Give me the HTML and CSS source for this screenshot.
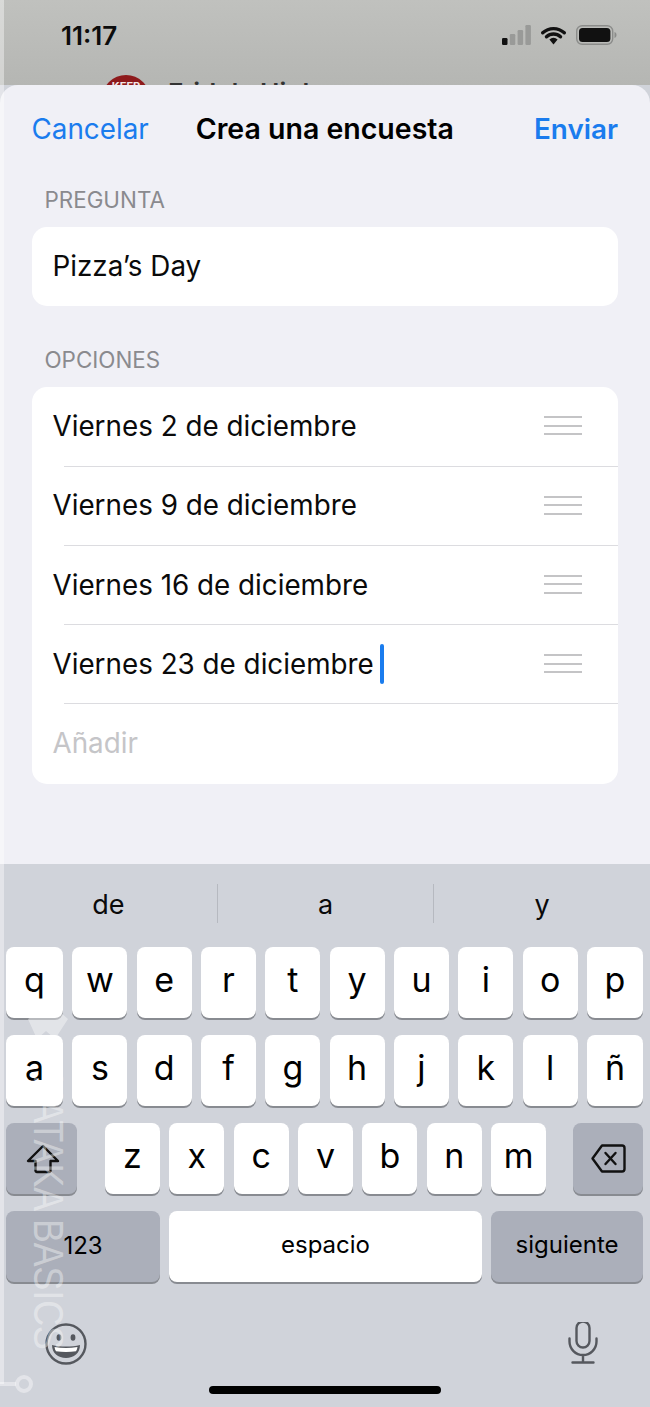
FILE: index.html
```html
<!DOCTYPE html>
<html lang="es">
<head>
    <meta charset="UTF-8">
    <meta name="viewport" content="width=device-width, initial-scale=1.0">
    <title>Crea una encuesta</title>
    <link rel="stylesheet" href="styles.css">
</head>
<body>
    <!-- Status bar and the chat behind the sheet -->
    <header class="backdrop">
        <div class="status-bar">
            <span class="status-time">11:17</span>
            <div class="status-icons">
                <svg width="29" height="20" viewBox="0 0 29 20">
                    <rect x="0" y="13" width="5.500" height="7" rx="1.200" fill="#111"/>
                    <rect x="7.800" y="9" width="5.500" height="11" rx="1.200" fill="#999a98"/>
                    <rect x="15.600" y="5" width="5.500" height="15" rx="1.200" fill="#999a98"/>
                    <rect x="23.400" y="0" width="5.500" height="20" rx="1.200" fill="#999a98"/>
                </svg>
                <svg width="25" height="19" viewBox="0 0 25 19">
                    <path d="M1.700 6.800a15.800 15.800 0 0 1 21.600 0M5.500 10.800a10.200 10.200 0 0 1 14 0" fill="none" stroke="#111" stroke-width="3.300" stroke-linecap="round"/>
                    <path d="M8.400 13.400a6.200 6.200 0 0 1 8.200 0L12.500 18.600z" fill="#111"/>
                </svg>
                <svg width="41" height="20" viewBox="0 0 41 20">
                    <rect x="0.700" y="0.700" width="36" height="18.600" rx="5.500" fill="none" stroke="#8b8c8a" stroke-width="1.400"/>
                    <rect x="3" y="3" width="31.400" height="14" rx="3.500" fill="#111"/>
                    <path d="M38.500 7v6c1.400-.4 2-1.600 2-3s-.6-2.600-2-3z" fill="#8b8c8a"/>
                </svg>
            </div>
        </div>
        <div class="chat-peek">
            <span class="chat-avatar">KEEP</span>
            <span class="chat-name">Frida's High</span>
        </div>
    </header>

    <main class="sheet">
        <nav class="sheet-nav">
            <span class="nav-link">Cancelar</span>
            <span class="nav-title">Crea una encuesta</span>
            <span class="nav-link nav-link-strong">Enviar</span>
        </nav>

        <div class="section-label">PREGUNTA</div>
        <div class="card">
            <div class="row">Pizza’s Day</div>
        </div>

        <div class="section-label section-label-options">OPCIONES</div>
        <div class="card">
            <div class="row row-line">Viernes 2 de diciembre<span class="handle"></span></div>
            <div class="row row-line">Viernes 9 de diciembre<span class="handle"></span></div>
            <div class="row row-line">Viernes 16 de diciembre<span class="handle"></span></div>
            <div class="row row-line">Viernes 23 de diciembre<span class="caret"></span><span class="handle"></span></div>
            <div class="row row-placeholder">Añadir</div>
        </div>
    </main>

    <section class="keyboard">
        <div class="suggestions">
            <span class="suggestion">de</span>
            <span class="suggestion">a</span>
            <span class="suggestion">y</span>
        </div>
        <div class="key-rows">
            <div class="key-row">
                <span class="key">q</span><span class="key">w</span><span class="key">e</span><span class="key">r</span><span class="key">t</span><span class="key">y</span><span class="key">u</span><span class="key">i</span><span class="key">o</span><span class="key">p</span>
            </div>
            <div class="key-row">
                <span class="key">a</span><span class="key">s</span><span class="key">d</span><span class="key">f</span><span class="key">g</span><span class="key">h</span><span class="key">j</span><span class="key">k</span><span class="key">l</span><span class="key">ñ</span>
            </div>
            <div class="key-row key-row-third">
                <span class="key key-dark key-shift">
                    <svg width="34" height="30" viewBox="0 0 34 30">
                        <path d="M17 2 2 17h7.500v9.500a1.500 1.500 0 0 0 1.500 1.500h12a1.500 1.500 0 0 0 1.500-1.500V17H32z" fill="none" stroke="#111" stroke-width="2.400" stroke-linejoin="round"/>
                    </svg>
                </span>
                <div class="key-letters">
                    <span class="key">z</span><span class="key">x</span><span class="key">c</span><span class="key">v</span><span class="key">b</span><span class="key">n</span><span class="key">m</span>
                </div>
                <span class="key key-dark key-delete">
                    <svg width="35" height="29" viewBox="0 0 35 29">
                        <path d="M11 1.500h20a2.500 2.500 0 0 1 2.500 2.500v21a2.500 2.500 0 0 1-2.500 2.500H11L1.500 14.500z" fill="none" stroke="#111" stroke-width="2.400" stroke-linejoin="round"/>
                        <path d="m14.500 9 10 11m0-11-10 11" fill="none" stroke="#111" stroke-width="2.400" stroke-linecap="round"/>
                    </svg>
                </span>
            </div>
            <div class="key-row key-row-bottom">
                <span class="key key-dark key-text key-numbers">123</span>
                <span class="key key-text key-space">espacio</span>
                <span class="key key-dark key-text key-next">siguiente</span>
            </div>
        </div>
        <div class="keyboard-tools">
            <svg width="44" height="44" viewBox="0 0 44 44">
                <circle cx="22" cy="22" r="19.500" fill="none" stroke="#55585e" stroke-width="2.400"/>
                <ellipse cx="15" cy="15.500" rx="2.400" ry="3.200" fill="#55585e"/>
                <ellipse cx="29" cy="15.500" rx="2.400" ry="3.200" fill="#55585e"/>
                <path d="M8 23c8 2 20 2 28 0 0 8-6 13-14 13S8 31 8 23z" fill="#55585e"/>
                <path d="M10.500 25c7.300 1.300 15.700 1.300 23 0-.3 1.800-.8 3.200-1.500 4.300-6.500 1-13.500 1-20 0-.7-1.100-1.200-2.500-1.500-4.300z" fill="#fff"/>
            </svg>
            <svg width="30" height="44" viewBox="0 2 30 44">
                <rect x="8.500" y="1.500" width="13" height="26" rx="6.500" fill="none" stroke="#55585e" stroke-width="2.400"/>
                <path d="M1.500 18.500v3a13.500 13.500 0 0 0 27 0v-3M15 35v7.500M4.500 42.500h21" fill="none" stroke="#55585e" stroke-width="2.400" stroke-linecap="round"/>
            </svg>
        </div>
        <div class="home-bar"></div>
    </section>

    <!-- Watermark over the whole screenshot -->
    <div class="wm-line"></div>
    <div class="wm-foot"></div>
    <div class="wm-dot"></div>
    <svg class="wm-logo" width="44" height="36" viewBox="0 0 44 36">
        <path d="M2 15 26 1l16 14-13 20-9-8-9 8z" fill="#fff"/>
    </svg>
    <div class="wm-text">XATAKA BASICS</div>
</body>
</html>
```

FILE: styles.css
```css
* {
    box-sizing: border-box;
}

body {
    margin: 0;
    width: 650px;
    height: 1407px;
    overflow: hidden;
    position: relative;
    display: flex;
    flex-direction: column;
    font-family: Inter, "Liberation Sans", sans-serif;
    color: #0a0a0a;
    background: #d0d3da;
}

.backdrop {
    height: 85px;
    overflow: hidden;
    background: linear-gradient(180deg, #c0c1be 0%, #b5b6b3 100%);
}

.status-bar {
    height: 70px;
    display: flex;
    align-items: center;
    justify-content: space-between;
    padding: 0 33px 0 61px;
}

.status-time {
    font-size: 26px;
    font-weight: 600;
    color: #0c0c0c;
}

.status-icons {
    display: flex;
    align-items: center;
    gap: 10px;
}

.chat-peek {
    display: flex;
    align-items: flex-start;
    gap: 18px;
    padding-left: 102px;
    margin-top: 5px;
}

.chat-avatar {
    width: 48px;
    height: 48px;
    padding-top: 4px;
    border-radius: 50%;
    background: #8e1a1c;
    color: #f2e6e6;
    font-size: 11px;
    font-weight: 700;
    line-height: 14px;
    text-align: center;
}

.chat-name {
    margin-top: 4px;
    font-size: 26px;
    font-weight: 600;
    line-height: 28px;
    color: #333;
}

.sheet {
    height: 779px;
    padding: 0 32px 0 31.500px;
    background: #f0f0f6;
    border-radius: 18px 18px 0 0;
}

.sheet-nav {
    height: 87px;
    display: grid;
    grid-template-columns: 1fr auto 1fr;
    align-items: center;
}

.nav-link {
    font-size: 27.800px;
    color: #1a7cee;
}

.nav-link-strong {
    justify-self: end;
    font-weight: 600;
}

.nav-title {
    font-size: 28.500px;
    font-weight: 600;
    color: #000;
}

.section-label {
    height: 55px;
    padding: 14px 0 0 13px;
    font-size: 22.400px;
    line-height: 28px;
    color: #8a8a8e;
}

.section-label-options {
    height: 81px;
    padding-top: 40px;
}

.card {
    background: #fff;
    border-radius: 15px;
    overflow: hidden;
}

.row {
    height: 79.300px;
    display: flex;
    align-items: center;
    position: relative;
    padding: 0 0 2px 21px;
    font-size: 27.800px;
}

.row-line::after {
    content: "";
    position: absolute;
    left: 32px;
    right: 0;
    bottom: 0;
    height: 1px;
    background: #dcdce0;
}

.row-placeholder {
    color: #c5c5c8;
}

.caret {
    width: 3.500px;
    height: 40px;
    margin-left: 6.500px;
    border-radius: 2px;
    background: #1a7cee;
}

/* three grey lines of the drag handle */
.handle {
    position: absolute;
    right: 36px;
    top: 29px;
    width: 38px;
    height: 19px;
    border-top: 2px solid #c4c4c6;
    border-bottom: 2px solid #c4c4c6;
}

.handle::after {
    content: "";
    position: absolute;
    left: 0;
    right: 0;
    top: 6.500px;
    height: 2px;
    background: #c4c4c6;
}

.keyboard {
    flex: 1;
    display: flex;
    flex-direction: column;
    background: #d0d3da;
}

.suggestions {
    height: 83px;
    display: grid;
    grid-template-columns: repeat(3, 1fr);
    padding: 20px 0 24px;
}

.suggestion {
    display: flex;
    align-items: center;
    justify-content: center;
    padding-top: 2px;
    font-size: 27px;
    border-left: 1px solid #b6b9c0;
}

.suggestion:first-child {
    border-left: none;
}

.key-rows {
    display: flex;
    flex-direction: column;
    gap: 17px;
    padding: 0 7px 0 6px;
}

.key-row {
    height: 71px;
    display: grid;
    grid-template-columns: 57px repeat(8, 1fr) 56px;
    gap: 9.400px;
}

.key-row-third {
    display: flex;
    gap: 0;
}

.key-letters {
    width: 441px;
    margin: 0 auto 0 28px;
    display: grid;
    grid-template-columns: repeat(7, 1fr);
    gap: 9.400px;
}

.key-row-bottom {
    display: flex;
    gap: 9px;
}

.key {
    display: flex;
    align-items: center;
    justify-content: center;
    height: 71px;
    padding-bottom: 6px;
    font-size: 34px;
    color: #000;
    background: #fff;
    border-radius: 8px;
    box-shadow: 0 2px 0 #888b91;
}

.key-dark {
    background: #abafba;
}

.key-shift {
    width: 71px;
    padding: 0 0 0 2px;
}

.key-delete {
    width: 70px;
    padding: 0 0 1px 1px;
}

.key-text {
    font-size: 24px;
    padding-bottom: 4px;
}

.key-numbers {
    width: 154px;
    padding-bottom: 2px;
}

.key-space {
    flex: 1;
}

.key-next {
    width: 152px;
}

.keyboard-tools {
    display: flex;
    align-items: center;
    justify-content: space-between;
    padding: 40px 52px 0 44px;
}

.home-bar {
    width: 232px;
    height: 8px;
    margin: 20px auto 0;
    border-radius: 4px;
    background: #000;
}

/* watermark */
.wm-line {
    position: absolute;
    left: 0;
    top: 0;
    width: 4px;
    height: 1384px;
    background: rgba(255, 255, 255, 0.4);
}

.wm-foot {
    position: absolute;
    left: 0;
    top: 1382px;
    width: 16px;
    height: 4px;
    background: rgba(255, 255, 255, 0.4);
}

.wm-dot {
    position: absolute;
    left: 15px;
    top: 1375px;
    width: 18px;
    height: 18px;
    border: 4px solid rgba(255, 255, 255, 0.4);
    border-radius: 50%;
}

.wm-logo {
    position: absolute;
    left: 26px;
    top: 1004px;
    opacity: 0.4;
}

.wm-text {
    position: absolute;
    left: 27px;
    bottom: 57px;
    writing-mode: vertical-rl;
    font-family: "Liberation Sans", sans-serif;
    font-size: 42px;
    line-height: 42px;
    color: rgba(255, 255, 255, 0.4);
    white-space: nowrap;
    transform: scaleY(0.85);
    transform-origin: bottom;
}
```
